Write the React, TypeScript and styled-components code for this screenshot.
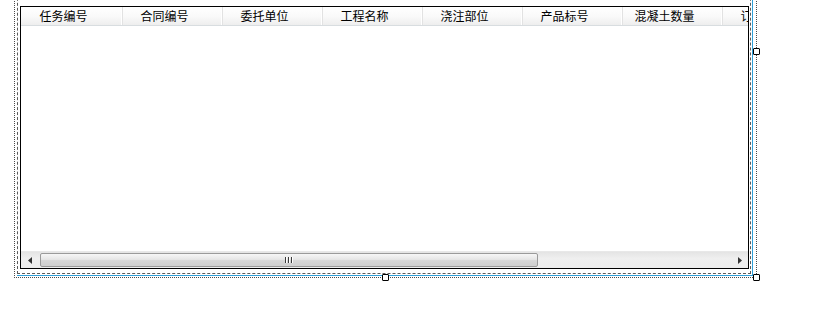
import React from "react";
import styled, { createGlobalStyle } from "styled-components";

const GlobalStyle = createGlobalStyle`
  html, body {
    margin: 0;
    padding: 0;
    background: #ffffff;
    overflow: hidden;
  }
  body {
    font-family: "Noto Sans CJK SC", "Noto Sans", sans-serif;
  }
`;

const Canvas = styled.div`
  /* dimension */
  position: relative;
  width: 839px;
  height: 316px;
  overflow: hidden;
`;

// designer selection frame (dotted), top runs off the page
const SelectFrame = styled.div`
  width: 743px;
  margin-left: 14px;
  margin-top: -30px;
  padding: 2px 3px 1px 2px;
  border: 1px dotted #4a4a4a;
  box-sizing: border-box;
`;

const FocusLine = styled.div`
  border-right: 1px solid #2f9fd8;
  border-bottom: 1px solid #2f9fd8;
  padding: 0 1px 1px 0;
`;

const DashedFrame = styled.div`
  border: 1px dashed #5a5a5a;
  padding: 32px 1px 4px 2px;
`;

const Grid = styled.div`
  /* dimension */
  height: 263px;
  border: 1px solid #000000;
  box-sizing: border-box;
  //display
  display: flex;
  flex-direction: column;
  overflow: hidden;
  background: #ffffff;
`;

const HeaderRow = styled.div`
  display: flex;
  flex: 0 0 19px;
  box-sizing: border-box;
  border-bottom: 1px solid #d8dde0;
  background: linear-gradient(#ffffff 0%, #fafafa 50%, #eeeeee 100%);
  white-space: nowrap;
`;

const HeaderCell = styled.div<{ $w: number }>`
  flex: 0 0 ${(p) => p.$w}px;
  box-sizing: border-box;
  padding-right: 16px;
  border-right: 1px solid #e2e2e2;
  box-shadow: inset -1px 0 0 #ffffff;
  text-align: center;
  font-size: 12px;
  line-height: 18px;
  color: #000000;
`;

const Body = styled.div`
  flex: 1;
  background: #ffffff;
`;

const HScroll = styled.div`
  flex: 0 0 17px;
  display: flex;
  align-items: center;
  background: linear-gradient(#e4e4e4, #efefef 40%, #ececec);
  border-top: 1px solid #e8e8e8;
  box-sizing: border-box;
`;

const ArrowBtn = styled.div`
  flex: 0 0 17px;
  height: 16px;
  display: flex;
  align-items: center;
  justify-content: center;
`;

const Thumb = styled.div`
  flex: 0 0 498px;
  height: 14px;
  margin-left: 2px;
  box-sizing: border-box;
  border: 1px solid #9a9a9a;
  border-radius: 2px;
  background: linear-gradient(#f6f6f6 0%, #e6e6e6 45%, #d6d6d6 55%, #cfcfcf 100%);
  display: flex;
  align-items: center;
  justify-content: center;
  gap: 1px;
`;

const Grip = styled.span`
  width: 1px;
  height: 6px;
  background: #3a3a3a;
  box-shadow: 1px 0 0 #ffffff;
  margin-right: 1px;
`;

const Track = styled.div`
  flex: 1;
`;

const Handle = styled.div<{ $x: number; $y: number }>`
  position: absolute;
  left: ${(p) => p.$x}px;
  top: ${(p) => p.$y}px;
  width: 5px;
  height: 5px;
  border: 1px solid #000000;
  border-radius: 1px;
  background: #ffffff;
`;

const columns = [
  "任务编号",
  "合同编号",
  "委托单位",
  "工程名称",
  "浇注部位",
  "产品标号",
  "混凝土数量",
  "订单编号",
];

const Arrow = ({ dir }: { dir: "left" | "right" }) => (
  <svg width="4" height="7" viewBox="0 0 4 7">
    {dir === "left" ? (
      <path d="M4 0 L0 3.5 L4 7 Z" fill="#333" />
    ) : (
      <path d="M0 0 L4 3.5 L0 7 Z" fill="#333" />
    )}
  </svg>
);

const App = () => {
  return (
    <Canvas>
      <GlobalStyle />
      <SelectFrame>
        <FocusLine>
          <DashedFrame>
            <Grid>
              <HeaderRow>
                {columns.map((c, i) => (
                  <HeaderCell key={c} $w={i === 0 ? 102 : 100}>
                    {c}
                  </HeaderCell>
                ))}
              </HeaderRow>
              <Body />
              <HScroll>
                <ArrowBtn>
                  <Arrow dir="left" />
                </ArrowBtn>
                <Thumb>
                  <Grip />
                  <Grip />
                  <Grip />
                </Thumb>
                <Track />
                <ArrowBtn>
                  <Arrow dir="right" />
                </ArrowBtn>
              </HScroll>
            </Grid>
          </DashedFrame>
        </FocusLine>
      </SelectFrame>
      <Handle $x={753} $y={48} />
      <Handle $x={382} $y={274} />
      <Handle $x={753} $y={274} />
    </Canvas>
  );
};

export default App;
